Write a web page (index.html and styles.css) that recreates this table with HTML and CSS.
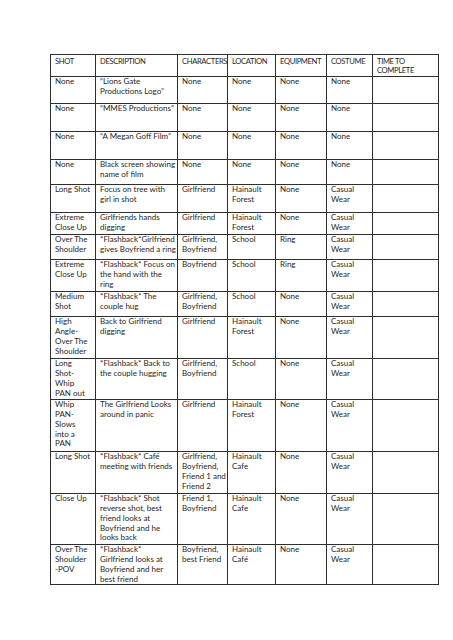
FILE: index.html
```html
<!DOCTYPE html>
<html>
<head>
<meta charset="utf-8">
<link rel="stylesheet" href="styles.css">
</head>
<body>
<table class="shots">
<colgroup>
<col class="c-shot"><col class="c-desc"><col class="c-char"><col class="c-loc"><col class="c-equip"><col class="c-cost"><col class="c-time">
</colgroup>
<tr class="head h21"><td>SHOT</td><td>DESCRIPTION</td><td>CHARACTERS</td><td>LOCATION</td><td>EQUIPMENT</td><td>COSTUME</td><td>TIME TO<br>COMPLETE</td></tr>
<tr class="h27"><td>None</td><td>“Lions Gate<br>Productions Logo”</td><td>None</td><td>None</td><td>None</td><td>None</td><td></td></tr>
<tr class="h28"><td>None</td><td>“MMES Productions”</td><td>None</td><td>None</td><td>None</td><td>None</td><td></td></tr>
<tr class="h28"><td>None</td><td>“A Megan Goff Film”</td><td>None</td><td>None</td><td>None</td><td>None</td><td></td></tr>
<tr class="h25"><td>None</td><td>Black screen showing<br>name of film</td><td>None</td><td>None</td><td>None</td><td>None</td><td></td></tr>
<tr class="h28"><td>Long Shot</td><td>Focus on tree with<br>girl in shot</td><td>Girlfriend</td><td>Hainault<br>Forest</td><td>None</td><td>Casual<br>Wear</td><td></td></tr>
<tr class="h22"><td>Extreme<br>Close Up</td><td>Girlfriends hands<br>digging</td><td>Girlfriend</td><td>Hainault<br>Forest</td><td>None</td><td>Casual<br>Wear</td><td></td></tr>
<tr class="h25"><td>Over The<br>Shoulder</td><td>*Flashback*Girlfriend<br>gives Boyfriend a ring</td><td>Girlfriend,<br>Boyfriend</td><td>School</td><td>Ring</td><td>Casual<br>Wear</td><td></td></tr>
<tr class="h32"><td>Extreme<br>Close Up</td><td>*Flashback* Focus on<br>the hand with the<br>ring</td><td>Boyfriend</td><td>School</td><td>Ring</td><td>Casual<br>Wear</td><td></td></tr>
<tr class="h25"><td>Medium<br>Shot</td><td>*Flashback* The<br>couple hug</td><td>Girlfriend,<br>Boyfriend</td><td>School</td><td>None</td><td>Casual<br>Wear</td><td></td></tr>
<tr class="h42"><td>High<br>Angle-<br>Over The<br>Shoulder</td><td>Back to Girlfriend<br>digging</td><td>Girlfriend</td><td>Hainault<br>Forest</td><td>None</td><td>Casual<br>Wear</td><td></td></tr>
<tr class="h41"><td>Long<br>Shot-<br>Whip<br>PAN out</td><td>*Flashback* Back to<br>the couple hugging</td><td>Girlfriend,<br>Boyfriend</td><td>School</td><td>None</td><td>Casual<br>Wear</td><td></td></tr>
<tr class="h52"><td>Whip<br>PAN-<br>Slows<br>into a<br>PAN</td><td>The Girlfriend Looks<br>around in panic</td><td>Girlfriend</td><td>Hainault<br>Forest</td><td>None</td><td>Casual<br>Wear</td><td></td></tr>
<tr class="h42"><td>Long Shot</td><td>*Flashback* Café<br>meeting with friends</td><td>Girlfriend,<br>Boyfriend,<br>Friend 1 and<br>Friend 2</td><td>Hainault<br>Cafe</td><td>None</td><td>Casual<br>Wear</td><td></td></tr>
<tr class="h51"><td>Close Up</td><td>*Flashback* Shot<br>reverse shot, best<br>friend looks at<br>Boyfriend and he<br>looks back</td><td>Friend 1,<br>Boyfriend</td><td>Hainault<br>Cafe</td><td>None</td><td>Casual<br>Wear</td><td></td></tr>
<tr class="h40"><td>Over The<br>Shoulder<br>-POV</td><td>*Flashback*<br>Girlfriend looks at<br>Boyfriend and her<br>best friend</td><td>Boyfriend,<br>best Friend</td><td>Hainault<br>Café</td><td>None</td><td>Casual<br>Wear</td><td></td></tr>
</table>
</body>
</html>
```
FILE: styles.css
```css
html, body {
  margin: 0;
  padding: 0;
  background: #fff;
}
body {
  padding: 54px 0 0 50px;
}
.shots {
  border-collapse: collapse;
  table-layout: fixed;
  width: 388px;
  font-family: Lato, "Liberation Sans", sans-serif;
  font-size: 8px;
  line-height: 9.7px;
  color: #262626;
}
.shots td {
  border: 1px solid #2e2e2e;
  padding: 0.5px 2px 0 4px;
  vertical-align: top;
  white-space: nowrap;
  overflow: hidden;
}
.head td {
  font-size: 7.6px;
  letter-spacing: -0.35px;
  padding-top: 1.5px;
}
.c-shot { width: 45px; }
.c-desc { width: 82px; }
.c-char { width: 50px; }
.c-loc { width: 48px; }
.c-equip { width: 51px; }
.c-cost { width: 46px; }
.c-time { width: 66px; }
.h21 { height: 21px; }
.h22 { height: 22px; }
.h25 { height: 25px; }
.h27 { height: 27px; }
.h28 { height: 28px; }
.h32 { height: 32px; }
.h40 { height: 40px; }
.h41 { height: 41px; }
.h42 { height: 42px; }
.h51 { height: 51px; }
.h52 { height: 52px; }
```
